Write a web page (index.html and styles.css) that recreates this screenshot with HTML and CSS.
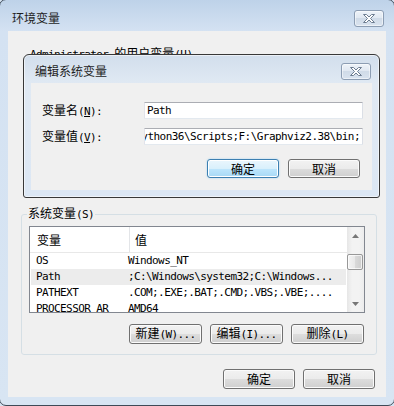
FILE: index.html
```html
<!DOCTYPE html>
<html lang="zh-CN">
<head>
    <meta charset="UTF-8">
    <title>环境变量</title>
    <link rel="stylesheet" href="styles.css">
</head>
<body>

    <div class="window">
        <!-- Outer window title -->
        <div class="titlebar">
            <span class="title">环境变量</span>
            <span class="close-btn">
                <svg width="12" height="9" viewBox="0 0 12 9"><polygon points="0.5,0.5 3.5,0.5 6,3 8.5,0.5 11.5,0.5 7.5,4.5 11.5,8.5 8.5,8.5 6,6 3.5,8.5 0.5,8.5 4.5,4.5" fill="#fff" stroke="#6d7d91" stroke-width="1" stroke-linejoin="round"/></svg>
            </span>
        </div>

        <div class="client">
            <!-- User variables (mostly hidden behind the edit dialog) -->
            <div class="user-group">
                <span class="hw">Administrator </span>的用户变量<span class="hw">(U)</span>
            </div>

            <!-- System variables -->
            <fieldset class="group">
                <legend>系统变量<span class="hw">(S)</span></legend>
                <div class="listview">
                    <div class="list-main">
                        <div class="list-header">
                            <div class="head-name">变量</div>
                            <div class="head-value">值</div>
                        </div>
                        <div class="list-row">
                            <div class="cell-name">OS</div>
                            <div class="cell-value">Windows_NT</div>
                        </div>
                        <div class="list-row selected">
                            <div class="cell-name">Path</div>
                            <div class="cell-value">;C:\Windows\system32;C:\Windows...</div>
                        </div>
                        <div class="list-row">
                            <div class="cell-name">PATHEXT</div>
                            <div class="cell-value">.COM;.EXE;.BAT;.CMD;.VBS;.VBE;....</div>
                        </div>
                        <div class="list-row">
                            <div class="cell-name">PROCESSOR_AR</div>
                            <div class="cell-value">AMD64</div>
                        </div>
                    </div>
                    <div class="scrollbar">
                        <div class="arrow">
                            <svg width="7" height="4" viewBox="0 0 7 4"><polygon points="3.5,0 7,4 0,4" fill="#777"/></svg>
                        </div>
                        <div class="track"><div class="thumb"></div></div>
                        <div class="arrow">
                            <svg width="7" height="4" viewBox="0 0 7 4"><polygon points="0,0 7,0 3.5,4" fill="#777"/></svg>
                        </div>
                    </div>
                </div>
                <div class="btn-row group-actions">
                    <button class="btn">新建<span class="hw">(W)...</span></button>
                    <button class="btn">编辑<span class="hw">(I)...</span></button>
                    <button class="btn">删除<span class="hw">(L)</span></button>
                </div>
            </fieldset>

            <div class="btn-row window-actions">
                <button class="btn">确定</button>
                <button class="btn">取消</button>
            </div>
        </div>

        <!-- Edit system variable dialog -->
        <div class="dialog">
            <div class="titlebar dialog-titlebar">
                <span class="title">编辑系统变量</span>
                <span class="close-btn">
                    <svg width="12" height="9" viewBox="0 0 12 9"><polygon points="0.5,0.5 3.5,0.5 6,3 8.5,0.5 11.5,0.5 7.5,4.5 11.5,8.5 8.5,8.5 6,6 3.5,8.5 0.5,8.5 4.5,4.5" fill="#fff" stroke="#6d7d91" stroke-width="1" stroke-linejoin="round"/></svg>
                </span>
            </div>
            <div class="dialog-client">
                <div class="field">
                    <label>变量名<span class="hw">(<u>N</u>):</span></label>
                    <div class="textbox">Path</div>
                </div>
                <div class="field">
                    <label>变量值<span class="hw">(<u>V</u>):</span></label>
                    <div class="textbox value"><span>%SystemRoot%;C:\Python36\Scripts;F:\Graphviz2.38\bin;</span></div>
                </div>
                <div class="btn-row dialog-actions">
                    <button class="btn default">确定</button>
                    <button class="btn">取消</button>
                </div>
            </div>
        </div>
    </div>

</body>
</html>
```

FILE: styles.css
```css
/* Global */
* {
    box-sizing: border-box;
}

body {
    margin: 0;
    width: 394px;
    height: 406px;
    overflow: hidden;
    font-family: "Noto Sans CJK SC", sans-serif;
    font-size: 12px;
    line-height: 14px;
    color: #000;
    background: #d6e4f3;
}

/* half-width (ascii) text, like the system font */
.hw {
    font-family: "DejaVu Sans Mono", monospace;
    font-size: 11px;
    letter-spacing: -0.6px;
}

/* Outer window */
.window {
    position: relative;
    margin: -1px;
    width: 396px;
    height: 407px;
    border: 1px solid #3f4a57;
    border-radius: 7px;
    background: linear-gradient(#bed2e9, #d4e2f2 31px, #d8e5f3);
    overflow: hidden;
}

.titlebar {
    height: 31px;
    display: flex;
    align-items: center;
    justify-content: space-between;
    padding: 5px 10px 0 12px;
}

.title {
    color: #1e1e1e;
}

.close-btn {
    width: 30px;
    height: 17px;
    display: flex;
    align-items: center;
    justify-content: center;
    border: 1px solid #8c9db3;
    border-radius: 3px;
    background: linear-gradient(#eef3f9, #dfe7f1 50%, #d0dbe8 50%, #d9e3ef);
    box-shadow: inset 0 0 0 1px rgba(255, 255, 255, 0.5);
}

.client {
    margin: 0 8px;
    height: 366px;
    padding-left: 13px;
    background: #f0f0f0;
}

.user-group {
    height: 175px;
    padding: 15px 0 0 9px;
}

/* Group box */
.group {
    margin: 0;
    width: 356px;
    padding: 4px 11px 10px 7px;
    border: 1px solid #d5dfe5;
    border-radius: 3px;
}

.group legend {
    margin-left: -2px;
    padding: 0 1px;
    line-height: 14px;
}

/* List view */
.listview {
    display: flex;
    height: 87px;
    border: 1px solid #828790;
    background: #fff;
}

.list-main {
    flex: 1;
    overflow: hidden;
}

.list-header {
    display: flex;
    height: 26px;
    align-items: center;
    border-bottom: 1px solid #e8e8e8;
}

.head-name {
    width: 99px;
    padding-left: 7px;
}

.head-value {
    flex: 1;
    height: 100%;
    display: flex;
    align-items: center;
    padding-left: 5px;
    border-left: 1px solid #e3e5e8;
}

.list-row {
    display: flex;
    height: 16px;
    margin: 0 1px;
    align-items: center;
    font-family: "DejaVu Sans Mono", monospace;
    font-size: 11px;
    letter-spacing: -0.6px;
    white-space: nowrap;
}

.list-row.selected {
    background: #ececec;
}

.cell-name {
    width: 97px;
    padding-left: 5px;
}

.cell-value {
    flex: 1;
}

.scrollbar {
    width: 17px;
    display: flex;
    flex-direction: column;
    background: linear-gradient(to right, #e6e6e6, #f3f3f3 30%, #f3f3f3 70%, #ececec);
}

.arrow {
    height: 17px;
    display: flex;
    align-items: center;
    justify-content: center;
}

.track {
    flex: 1;
    padding: 10px 1px 0 0;
}

.thumb {
    height: 16px;
    border: 1px solid #989898;
    border-radius: 2px;
    background: linear-gradient(to right, #f4f4f4, #e8e8e8 50%, #dadada 50%, #cdcdcd);
    box-shadow: inset 0 0 0 1px rgba(255, 255, 255, 0.7);
}

/* Buttons */
.btn-row {
    display: flex;
    justify-content: flex-end;
    gap: 8px;
}

.btn {
    width: 73px;
    height: 20px;
    padding: 0;
    font: inherit;
    color: #000;
    border: 1px solid #707070;
    border-radius: 3px;
    background: linear-gradient(#f2f2f2, #ebebeb 50%, #dddddd 50%, #cfcfcf);
    box-shadow: inset 0 0 0 1px #fbfbfb;
}

.btn.default {
    border-color: #3c7fb1;
    background: linear-gradient(#eaf6fd, #d9f0fc 50%, #bee6fd 50%, #a7d9f5);
    box-shadow: inset 0 0 0 1px #fff, 0 0 2px #9cd2f3;
}

.group-actions {
    margin-top: 11px;
    padding-right: 1px;
}

.window-actions {
    margin-top: 14px;
    padding-right: 11px;
}

.window-actions .btn {
    width: 72px;
}

/* Edit dialog, lying over the main window */
.dialog {
    position: absolute;
    left: 23px;
    top: 54px;
    width: 357px;
    height: 144px;
    border: 1px solid #383838;
    border-radius: 6px 6px 3px 3px;
    background: linear-gradient(#d2deec, #e0e9f3 28px, #dce7f4);
    box-shadow: inset 0 0 0 1px rgba(255, 255, 255, 0.55);
}

.dialog-titlebar {
    height: 28px;
    padding: 4px 8px 0 11px;
}

.dialog-client {
    margin: 0 7px;
    height: 107px;
    padding: 19px 9px 0 11px;
    background: #f0f0f0;
}

.field {
    display: flex;
    align-items: center;
    height: 17px;
}

.field + .field {
    margin-top: 9px;
}

.field label {
    width: 102px;
}

.textbox {
    flex: 1;
    height: 17px;
    padding: 0 2px;
    display: flex;
    align-items: center;
    overflow: hidden;
    white-space: nowrap;
    font-family: "DejaVu Sans Mono", monospace;
    font-size: 11px;
    letter-spacing: -0.6px;
    background: #fff;
    border: 1px solid;
    border-color: #abadb3 #dbdfe6 #e3e9ef #e2e3ea;
    border-radius: 1px;
}

.textbox.value {
    justify-content: flex-end;
    letter-spacing: -0.55px;
}

.dialog-actions {
    margin: 14px 3px 0 0;
    gap: 9px;
}

.dialog-actions .btn {
    width: 72px;
    height: 19px;
}
```
